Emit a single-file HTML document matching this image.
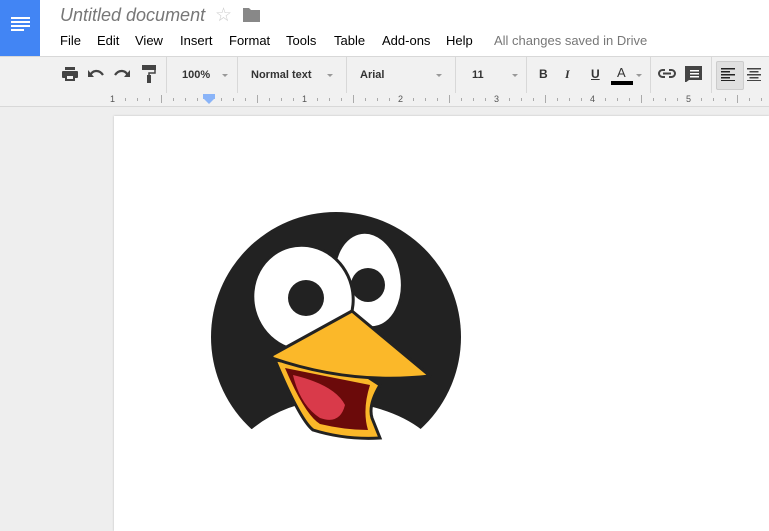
<!DOCTYPE html><html><head><style>
body{margin:0;width:769px;height:531px;overflow:hidden;background:#eeeeee;font-family:"Liberation Sans",Arial,sans-serif;position:relative}
.a{position:absolute}
.menu span{position:absolute;top:33px;font-size:13px;color:#000}
.tb{left:0;top:56px;width:769px;height:36px;background:#f1f1f1;border-top:1px solid #d8d8d8;border-bottom:1px solid #d8d8d8}
.sep{position:absolute;top:0;width:1px;height:36px;background:#d8d8d8}
.dd{position:absolute;top:12px;font-size:11px;font-weight:bold;color:#333}
.ar{position:absolute;top:17px;width:0;height:0;border-left:3px solid transparent;border-right:3px solid transparent;border-top:3px solid #999}
.rl{left:0;top:93px;width:769px;height:13px;background:#f1f1f1;border-bottom:1px solid #d8d8d8}
.rn{position:absolute;top:1px;font-size:9px;color:#555}
</style></head><body>
<div class="a" style="left:0;top:0;width:769px;height:56px;background:#fff"></div>
<div class="a" style="left:0;top:0;width:40px;height:56px;background:#4285f4">
<div class="a" style="left:11px;top:17px;width:19px;height:2px;background:#fff"></div>
<div class="a" style="left:11px;top:21px;width:19px;height:2px;background:#fff"></div>
<div class="a" style="left:11px;top:25px;width:19px;height:2px;background:#fff"></div>
<div class="a" style="left:11px;top:29px;width:13px;height:2px;background:#fff"></div>
</div>
<div class="a" style="left:60px;top:5px;font-size:18px;font-style:italic;color:#777">Untitled document</div>
<div class="a" style="left:215px;top:4px;font-size:19px;color:#ccc">☆</div>
<svg class="a" style="left:243px;top:8px" width="17" height="14"><path d="M0 0H6L8 2H17V14H0Z" fill="#888"/></svg>
<div class="menu"><span style="left:60px">File</span><span style="left:97px">Edit</span><span style="left:135px">View</span><span style="left:180px">Insert</span><span style="left:229px">Format</span><span style="left:286px">Tools</span><span style="left:334px">Table</span><span style="left:382px">Add-ons</span><span style="left:446px">Help</span><span style="left:494px;color:#777">All changes saved in Drive</span></div>
<div class="a tb">
<svg class="a" style="left:62px;top:10px" width="16" height="14"><rect x="3" y="0" width="10" height="3" fill="#444"/><rect x="0" y="4" width="16" height="7" rx="1" fill="#444"/><rect x="3" y="8" width="10" height="6" fill="#444"/><rect x="5" y="9" width="6" height="3" fill="#f1f1f1"/></svg>
<svg class="a" style="left:88px;top:11px" width="16" height="10"><path d="M2 8C4 2 11 1 15 7" stroke="#444" stroke-width="2.2" fill="none"/><path d="M0 2V9H6Z" fill="#444"/></svg>
<svg class="a" style="left:114px;top:11px" width="16" height="10"><path d="M14 8C12 2 5 1 1 7" stroke="#444" stroke-width="2.2" fill="none"/><path d="M16 2V9H10Z" fill="#444"/></svg>
<svg class="a" style="left:141px;top:8px" width="16" height="18"><rect x="1" y="0" width="14" height="5" fill="#444"/><path d="M14 5V8H8V11" stroke="#444" stroke-width="1.5" fill="none"/><rect x="6" y="10" width="4" height="8" fill="#444"/></svg>
<div class="sep" style="left:166px"></div>
<div class="dd" style="left:182px">100%</div><div class="ar" style="left:222px"></div>
<div class="sep" style="left:237px"></div>
<div class="dd" style="left:251px">Normal text</div><div class="ar" style="left:327px"></div>
<div class="sep" style="left:346px"></div>
<div class="dd" style="left:360px">Arial</div><div class="ar" style="left:436px"></div>
<div class="sep" style="left:455px"></div>
<div class="dd" style="left:472px">11</div><div class="ar" style="left:512px"></div>
<div class="sep" style="left:526px"></div>
<div class="dd" style="left:539px;top:10px;font-size:12px">B</div>
<div class="dd" style="left:565px;top:10px;font-size:12px;font-style:italic;font-family:'Liberation Serif',serif">I</div>
<div class="dd" style="left:591px;top:10px;font-size:12px;text-decoration:underline">U</div>
<div class="dd" style="left:617px;top:8px;font-size:13px;font-weight:normal">A</div>
<div class="a" style="left:611px;top:24px;width:22px;height:4px;background:#000"></div>
<div class="ar" style="left:636px"></div>
<div class="sep" style="left:650px"></div>
<svg class="a" style="left:658px;top:12px" width="18" height="9"><rect x="1" y="1" width="16" height="7" rx="3.5" stroke="#444" stroke-width="2" fill="none"/><rect x="5" y="3.5" width="8" height="2" fill="#444"/><rect x="7" y="0" width="4" height="2" fill="#f1f1f1"/><rect x="7" y="7" width="4" height="2" fill="#f1f1f1"/></svg>
<svg class="a" style="left:685px;top:9px" width="18" height="16"><path d="M0 0H17V14H4L0 17Z" fill="#444"/><rect x="5" y="4" width="9" height="1.5" fill="#fff"/><rect x="5" y="7" width="9" height="1.5" fill="#fff"/><rect x="5" y="10" width="9" height="1.5" fill="#fff"/></svg>
<div class="sep" style="left:711px"></div>
<div class="a" style="left:716px;top:4px;width:26px;height:27px;background:#e0e0e0;border:1px solid #ccc;border-radius:2px"></div>
<svg class="a" style="left:721px;top:11px" width="16" height="13"><g fill="#222"><rect y="0" width="14" height="1.5"/><rect y="3" width="9" height="1.5"/><rect y="6" width="14" height="1.5"/><rect y="9" width="9" height="1.5"/><rect y="12" width="14" height="1.5"/></g></svg>
<svg class="a" style="left:747px;top:11px" width="16" height="13"><g fill="#444"><rect y="0" width="14" height="1.5"/><rect x="2.5" y="3" width="9" height="1.5"/><rect y="6" width="14" height="1.5"/><rect x="2.5" y="9" width="9" height="1.5"/><rect y="12" width="14" height="1.5"/></g></svg>
</div>
<div class="a rl">
<div class="a" style="left:113px;top:5px;width:656px;height:3px;background:repeating-linear-gradient(90deg,#aaa 0 1px,transparent 1px 12px)"></div>
<div class="a" style="left:113px;top:2px;width:656px;height:8px;background:repeating-linear-gradient(90deg,transparent 0 48px,#aaa 48px 49px,transparent 49px 96px)"></div>
<span class="rn" style="left:110px;background:#f1f1f1">1</span>
<span class="rn" style="left:302px;background:#f1f1f1">1</span>
<span class="rn" style="left:398px;background:#f1f1f1">2</span>
<span class="rn" style="left:494px;background:#f1f1f1">3</span>
<span class="rn" style="left:590px;background:#f1f1f1">4</span>
<span class="rn" style="left:686px;background:#f1f1f1">5</span>
<svg class="a" style="left:203px;top:1px" width="12" height="11"><rect width="12" height="5" fill="#8ab4f8"/><path d="M1 5H11L6 10Z" fill="#8ab4f8"/></svg>
</div>
<div class="a" style="left:114px;top:116px;width:655px;height:415px;background:#fff;box-shadow:0 0 2px #bbb"></div>
<svg class="a" style="left:0;top:0" width="769" height="531">
<defs><clipPath id="c"><path d="M200 200H480V429L422 430Q390 405 330 400Q285 402 252 429H200Z"/></clipPath></defs>
<circle cx="336" cy="337" r="125" fill="#222" clip-path="url(#c)"/>
<ellipse cx="368" cy="280" rx="34" ry="48" fill="#fff" stroke="#222" stroke-width="3" transform="rotate(-8 368 280)"/>
<ellipse cx="303" cy="298" rx="50" ry="53" fill="#fff" stroke="#222" stroke-width="3" transform="rotate(-15 303 298)"/>
<circle cx="306" cy="298" r="18" fill="#222"/>
<circle cx="368" cy="285" r="17" fill="#222"/>
<path d="M275 360Q300 420 313 430Q345 440 380 438L372 418Q368 405 380 385L360 372Z" fill="#fbb829" stroke="#222" stroke-width="3"/>
<path d="M285 368Q305 415 320 424Q345 430 368 430Q362 410 370 385Z" fill="#6b0a0a"/>
<path d="M293 375Q300 405 320 418Q340 425 345 405Q335 385 293 375Z" fill="#d93a4a"/>
<path d="M272 355L352 311L430 376Q350 385 272 358Z" fill="#fbb829" stroke="#222" stroke-width="3" stroke-linejoin="round"/>
</svg>
</body></html>
